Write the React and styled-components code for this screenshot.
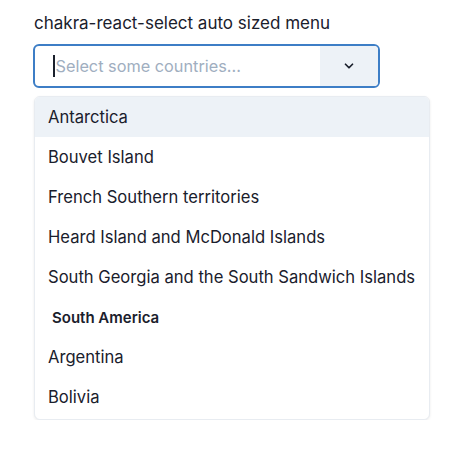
import React from 'react'
import styled, { createGlobalStyle } from 'styled-components'

const GlobalStyle = createGlobalStyle`
	body {
		margin: 0;
		background: #ffffff;
		font-family: Inter, "Noto Sans", sans-serif;
		color: #1a202c;
	}
`;

const groups = [
	{
		label: 'Antarctica',
		hideLabel: true,
		options: ['Antarctica', 'Bouvet Island', 'French Southern territories', 'Heard Island and McDonald Islands', 'South Georgia and the South Sandwich Islands']
	},
	{
		label: 'South America',
		options: ['Argentina', 'Bolivia']
	}
];

export default function App() {
	return (
		<>
			<GlobalStyle />
			<Page>
				<Label>chakra-react-select auto sized menu</Label>
				<Control>
					<ValueContainer>
						<Caret />
						<Placeholder>Select some countries...</Placeholder>
					</ValueContainer>
					<Indicator>
						<svg width="14" height="14" viewBox="0 0 24 24" fill="none" stroke="#1a202c" strokeWidth="3" strokeLinecap="round" strokeLinejoin="round">
							<path d="M6 9l6 6 6-6" />
						</svg>
					</Indicator>
				</Control>
				<Menu>
					{groups.map((group) => (
						<Group key={group.label}>
							{!group.hideLabel && <GroupHeading>{group.label}</GroupHeading>}
							{group.options.map((option) => (
								<Option key={option} focused={option === 'Antarctica'}>{option}</Option>
							))}
						</Group>
					))}
				</Menu>
			</Page>
		</>
	)
}

const Page = styled.div`
	padding: 13px 0 0 33px;
	display: flex;
	flex-direction: column;
	align-items: flex-start;
`;

const Label = styled.div`
	font-size: 17px;
	font-weight: 400;
	line-height: 20px;
	margin: 0 0 11px 1px;
	color: #1a202c;
`;

const Control = styled.div`
	box-sizing: border-box;
	width: 347px;
	height: 44px;
	display: flex;
	border: 2px solid #3d7ec6;
	border-radius: 6px;
	overflow: hidden;
	background: #ffffff;
`;

const ValueContainer = styled.div`
	flex: 1;
	display: flex;
	align-items: center;
	padding-left: 18px;
`;

const Caret = styled.span`
	width: 1.5px;
	height: 22px;
	background: #1a202c;
	margin-right: 1px;
`;

const Placeholder = styled.span`
	font-size: 16.3px;
	color: #a0aec0;
`;

const Indicator = styled.div`
	width: 58px;
	display: flex;
	align-items: center;
	justify-content: center;
	background: #edf2f7;
`;

const Menu = styled.div`
	box-sizing: border-box;
	margin: 8px 0 0 1px;
	width: 396px;
	background: #ffffff;
	border: 1px solid #e8ecf1;
	border-radius: 6px;
	box-shadow: 0 1px 3px rgba(0, 0, 0, 0.08);
	overflow: hidden;
	padding-bottom: 2px;
`;

const Group = styled.div`
	display: flex;
	flex-direction: column;
`;

const GroupHeading = styled.div`
	height: 40px;
	display: flex;
	align-items: center;
	padding-left: 17px;
	font-size: 15px;
	font-weight: 600;
	color: #1a202c;
`;

const Option = styled.div`
	height: 40px;
	display: flex;
	align-items: center;
	padding-left: 13px;
	font-size: 16.6px;
	color: #1a202c;
	background: ${(p) => (p.focused ? '#edf2f7' : 'transparent')};
	white-space: nowrap;
`;
